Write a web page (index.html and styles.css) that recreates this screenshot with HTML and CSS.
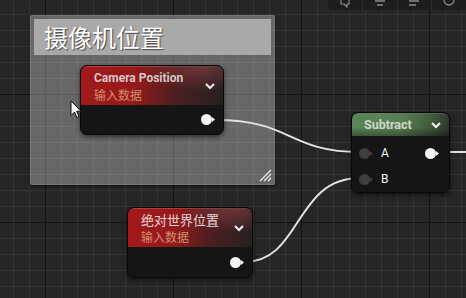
FILE: index.html
```html
<!DOCTYPE html>
<html lang="zh-CN">
<head>
    <meta charset="UTF-8">
    <title>材质图</title>
    <link rel="stylesheet" href="styles.css">
</head>
<body>
    <div class="graph">
        <div class="toolbar">
            <span class="tool-item">
                <svg width="14" height="8" viewBox="0 0 14 8"><path d="M3 0 L3 4 L6 4 L9 7 L9 4 L11 4 L11 0" fill="none" stroke="#8a8a8a" stroke-width="1.2"/></svg>
            </span>
            <span class="tool-item">
                <svg width="14" height="8" viewBox="0 0 14 8"><path d="M2 1 H12 M4 5 H10" stroke="#8a8a8a" stroke-width="1.4"/></svg>
            </span>
            <span class="tool-item">
                <svg width="14" height="8" viewBox="0 0 14 8"><path d="M2 1 H12 M2 5 H9" stroke="#8a8a8a" stroke-width="1.4"/></svg>
            </span>
            <span class="tool-item">
                <svg width="14" height="8" viewBox="0 0 14 8"><path d="M2 0 A5 5 0 0 0 12 0" fill="none" stroke="#8a8a8a" stroke-width="1.3"/></svg>
            </span>
        </div>

        <div class="comment">
            <div class="comment-title">摄像机位置</div>
            <svg class="resize-grip" width="14" height="14" viewBox="0 0 14 14">
                <path d="M13 2 L2 13 M13 6 L6 13 M13 10 L10 13" stroke="#e8e8e8" stroke-width="1.3"/>
            </svg>
        </div>

        <svg class="wires" width="466" height="298" viewBox="0 0 466 298">
            <path d="M216 120 C 292 120, 288 152, 360 152" />
            <path d="M244 262 C 302 262, 294 178, 360 178" />
            <path d="M442 152 H 466" />
        </svg>

        <div class="node node-camera">
            <div class="node-header header-red">
                <div class="node-titles">
                    <div class="node-title">Camera Position</div>
                    <div class="node-sub">输入数据</div>
                </div>
                <svg class="chevron" width="10" height="7" viewBox="0 0 10 7"><polyline points="1,1 5,5 9,1"/></svg>
            </div>
            <div class="node-body out-only">
                <svg class="pin" width="15" height="11" viewBox="0 0 15 11"><circle cx="5.5" cy="5.5" r="5.5" fill="#f4f4f4"/><path d="M11 3 L14 5.5 L11 8 Z" fill="#f4f4f4"/></svg>
            </div>
        </div>

        <div class="node node-world">
            <div class="node-header header-red">
                <div class="node-titles">
                    <div class="node-title cjk">绝对世界位置</div>
                    <div class="node-sub">输入数据</div>
                </div>
                <svg class="chevron" width="10" height="7" viewBox="0 0 10 7"><polyline points="1,1 5,5 9,1"/></svg>
            </div>
            <div class="node-body out-only">
                <svg class="pin" width="15" height="11" viewBox="0 0 15 11"><circle cx="5.5" cy="5.5" r="5.5" fill="#f4f4f4"/><path d="M11 3 L14 5.5 L11 8 Z" fill="#f4f4f4"/></svg>
            </div>
        </div>

        <div class="node node-subtract">
            <div class="node-header header-green">
                <div class="node-title">Subtract</div>
                <svg class="chevron" width="10" height="7" viewBox="0 0 10 7"><polyline points="1,1 5,5 9,1"/></svg>
            </div>
            <div class="node-body">
                <div class="pin-row">
                    <svg class="pin" width="15" height="11" viewBox="0 0 15 11"><circle cx="5.5" cy="5.5" r="5.5" fill="#3e3e3e"/><path d="M11 3 L14 5.5 L11 8 Z" fill="#3e3e3e"/></svg>
                    <span class="pin-label">A</span>
                    <svg class="pin pin-out" width="15" height="11" viewBox="0 0 15 11"><circle cx="5.5" cy="5.5" r="5.5" fill="#f4f4f4"/><path d="M11 3 L14 5.5 L11 8 Z" fill="#f4f4f4"/></svg>
                </div>
                <div class="pin-row">
                    <svg class="pin" width="15" height="11" viewBox="0 0 15 11"><circle cx="5.5" cy="5.5" r="5.5" fill="#3e3e3e"/><path d="M11 3 L14 5.5 L11 8 Z" fill="#3e3e3e"/></svg>
                    <span class="pin-label">B</span>
                </div>
            </div>
        </div>

        <svg class="cursor" width="13" height="19" viewBox="0 0 13 19">
            <path d="M1 1 L1 15.5 L4.5 12 L7 17.5 L9 16.5 L6.6 11.2 L11 11.2 Z" fill="#ffffff" stroke="#111" stroke-width="1"/>
        </svg>
    </div>
</body>
</html>
```

FILE: styles.css
```css
:root {
    --grid-bg: #262626;
    --grid-minor: #343434;
    --grid-major: #131313;
    --node-body: #151515;
    --wire: #e2e2e2;
}

* {
    margin: 0;
    padding: 0;
    box-sizing: border-box;
}

body {
    font-family: Roboto, "Noto Sans", "Noto Sans CJK SC", sans-serif;
    background: var(--grid-bg);
    overflow: hidden;
}

.graph {
    position: relative;
    width: 466px;
    height: 298px;
    overflow: hidden;
    background-color: var(--grid-bg);
    background-image:
        linear-gradient(90deg, var(--grid-major) 1px, transparent 1px),
        linear-gradient(var(--grid-major) 1px, transparent 1px),
        linear-gradient(90deg, var(--grid-minor) 1px, transparent 1px),
        linear-gradient(var(--grid-minor) 1px, transparent 1px);
    background-size: 128px 128px, 128px 128px, 16px 16px, 16px 16px;
    background-position: 45px 0, 0 94px, 13px 0, 0 14px;
}

/* 顶部工具条 */
.toolbar {
    position: absolute;
    top: 0;
    right: 0;
    width: 138px;
    height: 10px;
    display: flex;
    background: #1d1d1d;
    border-bottom-left-radius: 4px;
    z-index: 5;
}

.tool-item {
    flex: 1;
    display: flex;
    justify-content: center;
    align-items: flex-end;
    padding-bottom: 2px;
    border-left: 1px solid #2c2c2c;
}

.tool-item:first-child {
    border-left: none;
}

/* 注释框 */
.comment {
    position: absolute;
    left: 30px;
    top: 15px;
    width: 245px;
    height: 170px;
    padding: 3px;
    background: rgba(255, 255, 255, 0.3);
    border: 1px solid rgba(255, 255, 255, 0.1);
    box-shadow: 0 1px 3px rgba(0, 0, 0, 0.6);
    border-radius: 2px;
}

.comment-title {
    height: 36px;
    background: #a9a9a9;
    color: #fff;
    font-family: "Noto Sans CJK SC", sans-serif;
    font-size: 24px;
    line-height: 36px;
    padding-left: 10px;
    text-shadow: 1px 1px 1px rgba(0, 0, 0, 0.6);
}

.resize-grip {
    position: absolute;
    right: 2px;
    bottom: 2px;
}

.wires {
    position: absolute;
    left: 0;
    top: 0;
}

.wires path {
    fill: none;
    stroke: var(--wire);
    stroke-width: 2;
}

/* 节点 */
.node {
    position: absolute;
    display: flex;
    flex-direction: column;
    background: var(--node-body);
    border: 1px solid #080808;
    border-radius: 7px;
    box-shadow: 0 2px 5px rgba(0, 0, 0, 0.55);
    overflow: hidden;
}

.node-camera {
    left: 80px;
    top: 65px;
    width: 144px;
    height: 70px;
}

.node-world {
    left: 127px;
    top: 207px;
    width: 126px;
    height: 71px;
}

.node-subtract {
    left: 351px;
    top: 112px;
    width: 99px;
    height: 81px;
}

.node-header {
    display: flex;
    justify-content: space-between;
    align-items: center;
    padding: 0 8px 0 13px;
    border-radius: 6px 6px 0 0;
}

.header-red {
    height: 39px;
    background:
        radial-gradient(ellipse 60% 90% at 85% 0%, rgba(150, 70, 75, 0.55), transparent 70%),
        linear-gradient(100deg, #a4191a 0%, #951a1b 38%, #4a1f20 68%, #262020 100%);
    border-top: 1px solid rgba(255, 170, 170, 0.25);
}

.header-green {
    height: 23px;
    padding-left: 12px;
    background:
        linear-gradient(180deg, rgba(0, 0, 0, 0) 60%, rgba(0, 0, 0, 0.35) 100%),
        linear-gradient(100deg, #5a8556 0%, #587f54 50%, #3d5239 85%, #2c3329 100%);
    border-top: 1px solid rgba(190, 230, 180, 0.3);
}

.node-titles {
    display: flex;
    flex-direction: column;
    gap: 1px;
    padding-top: 1px;
}

.node-title {
    font-size: 12px;
    font-weight: bold;
    color: #d6c8c8;
    line-height: 16px;
}

.node-title.cjk {
    font-family: "Noto Sans CJK SC", sans-serif;
    font-weight: normal;
    font-size: 13px;
    color: #e2d6d6;
}

.header-green .node-title {
    color: #cbd6c8;
    font-size: 12.5px;
}

.node-sub {
    font-family: "Noto Sans CJK SC", sans-serif;
    font-size: 12px;
    line-height: 16px;
    color: #d28f6c;
}

.chevron polyline {
    fill: none;
    stroke: #f0f0f0;
    stroke-width: 2;
}

.node-body {
    flex: 1;
    display: flex;
    flex-direction: column;
    padding-top: 4px;
}

.node-body.out-only {
    padding: 0 7px 0 0;
    align-items: flex-end;
    justify-content: center;
}

.pin-row {
    height: 26px;
    display: flex;
    align-items: center;
    padding-left: 7px;
}

.pin-label {
    color: #f2f2f2;
    font-size: 12px;
    margin-left: 7px;
}

.pin-out {
    margin-left: auto;
    margin-right: 9px;
}

.cursor {
    position: absolute;
    left: 70px;
    top: 100px;
    z-index: 10;
}
```
